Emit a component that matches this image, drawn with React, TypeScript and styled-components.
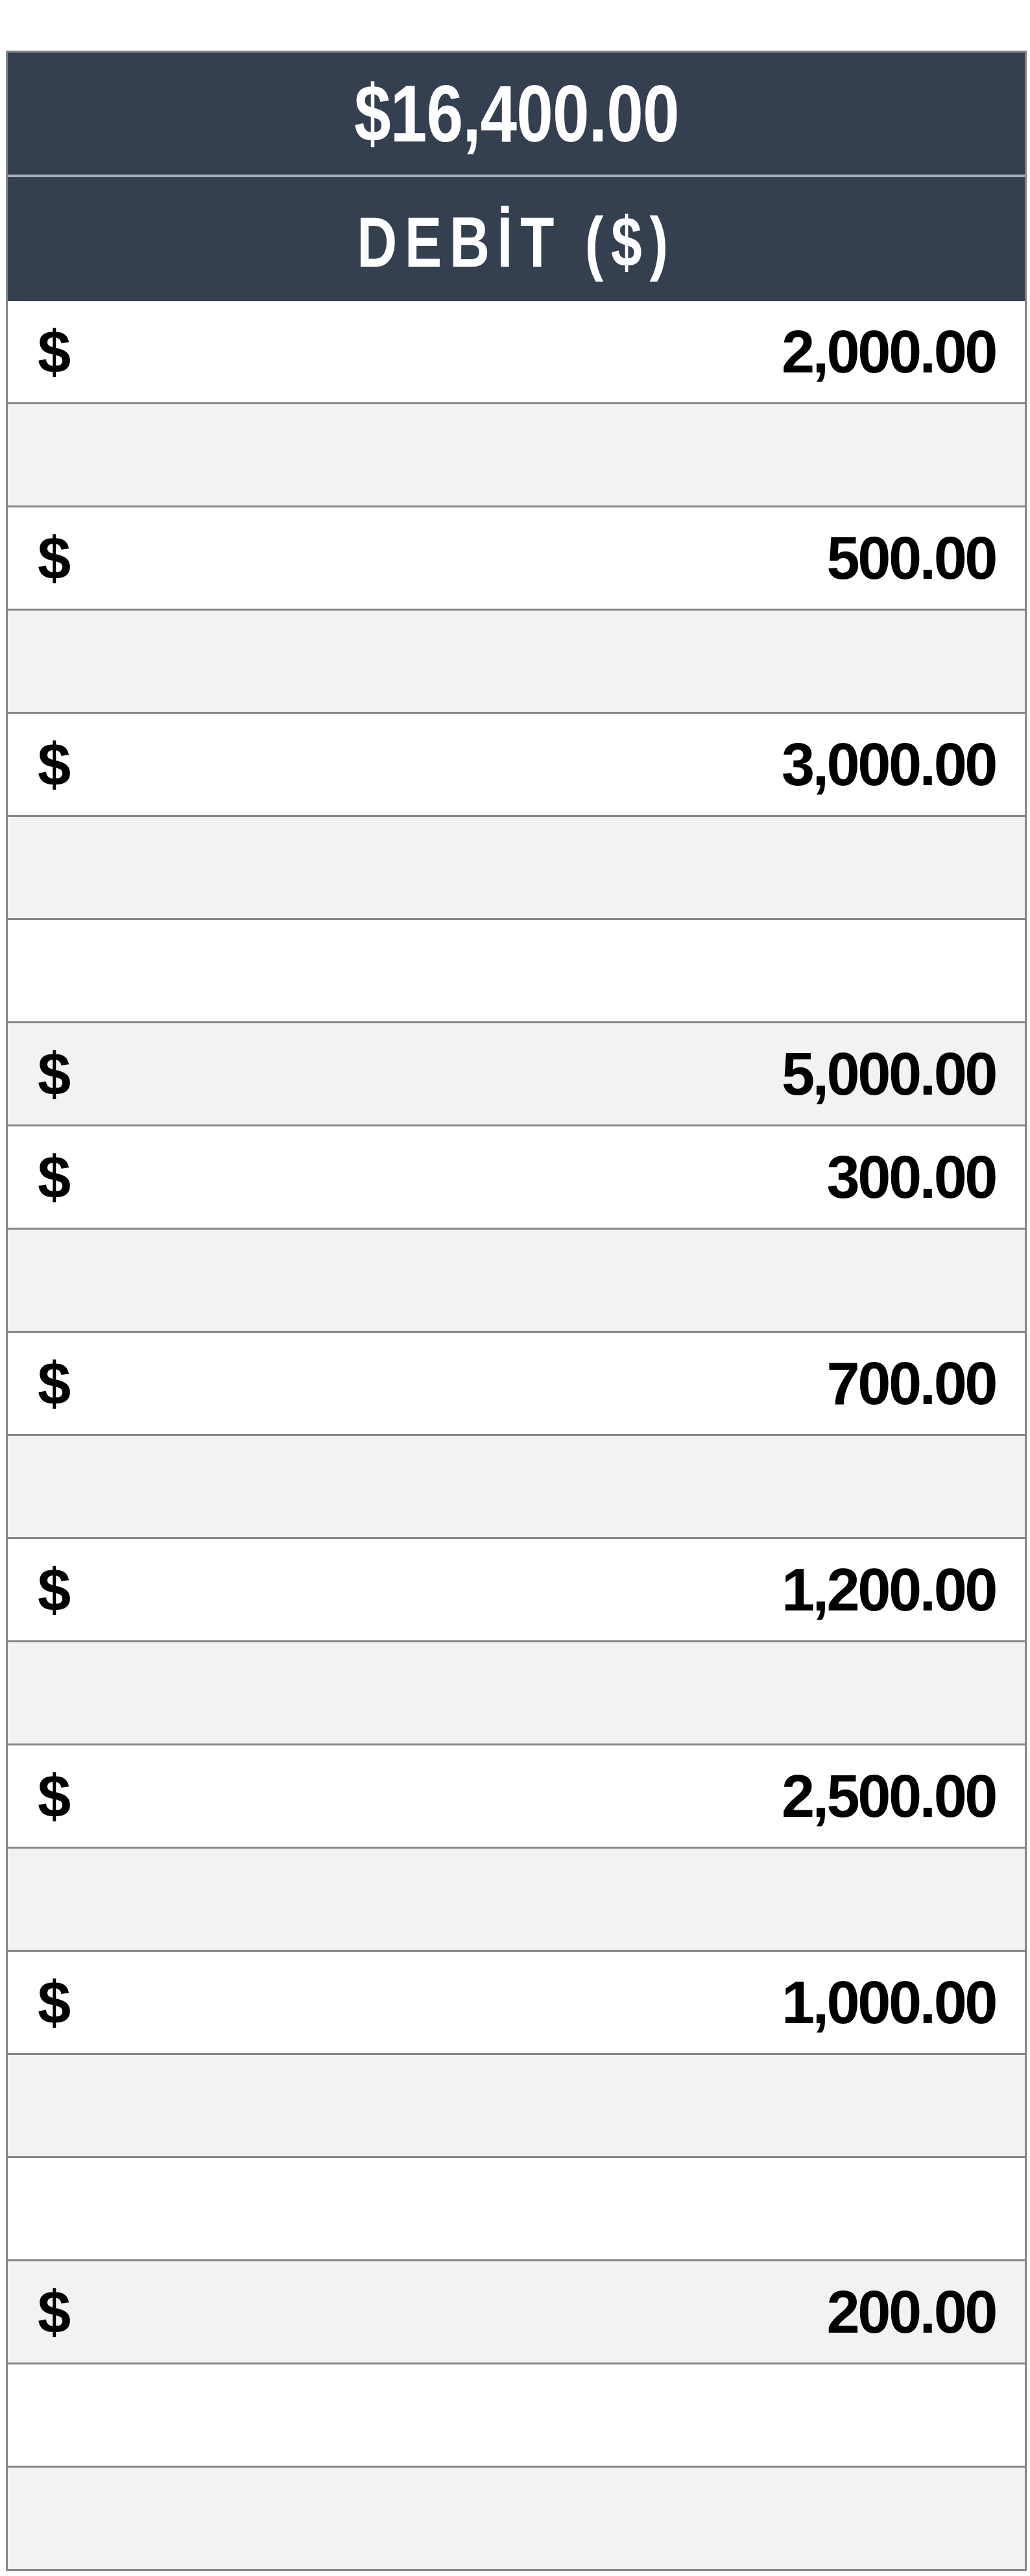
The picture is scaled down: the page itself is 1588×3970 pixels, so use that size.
import styled, { createGlobalStyle } from 'styled-components';

const GlobalStyle = createGlobalStyle`
    html, body {
        margin: 0;
        padding: 0;
        background: #ffffff;
    }
`;

const BORDER = '#858585';
const HEADER_BG = '#343f50';

const entries: (number | null)[] = [
    2000, null, 500, null, 3000, null, null, 5000, 300, null, 700,
    null, 1200, null, 2500, null, 1000, null, null, 200, null, null
];

function formatAmount(value: number) {
    return value.toLocaleString('en-US', { minimumFractionDigits: 2, maximumFractionDigits: 2 });
}

export default function App() {
    const total = entries.reduce<number>((sum, value) => sum + (value ?? 0), 0);

    return (
        <Page>
            <GlobalStyle />
            <Sheet>
                <TotalRow>
                    <Condensed>${formatAmount(total)}</Condensed>
                </TotalRow>
                <TitleRow>
                    <Condensed spaced>DEBİT ($)</Condensed>
                </TitleRow>
                {entries.map((value, index) => (
                    <Row key={index} shaded={index % 2 === 1}>
                        {value !== null && (
                            <>
                                <Currency>$</Currency>
                                <Amount>{formatAmount(value)}</Amount>
                            </>
                        )}
                    </Row>
                ))}
            </Sheet>
        </Page>
    );
}

const Page = styled.div`
    padding: 78px 5px 6px 9px;
`;

const Sheet = styled.div`
    display: flex;
    flex-direction: column;
    border-left: 3px solid ${BORDER};
    border-right: 3px solid ${BORDER};
    border-top: 3px solid ${BORDER};
`;

const HeaderRow = styled.div`
    display: flex;
    align-items: center;
    justify-content: center;
    box-sizing: border-box;
    background: ${HEADER_BG};
    color: #ffffff;
    font-family: 'Liberation Sans', Arial, sans-serif;
    font-weight: 700;
    overflow: hidden;
`;

const TotalRow = styled(HeaderRow)`
    height: 192px;
    font-size: 124px;
    border-bottom: 4px solid #a9b0ba;
`;

const TitleRow = styled(HeaderRow)`
    height: 191px;
    font-size: 110px;
    padding-top: 8px;
`;

const Condensed = styled.span<{ spaced?: boolean }>`
    display: inline-block;
    line-height: 1;
    transform: scaleX(${props => (props.spaced ? 0.78 : 0.82)});
    letter-spacing: ${props => (props.spaced ? '15px' : '-1px')};
    white-space: nowrap;
`;

const Row = styled.div<{ shaded: boolean }>`
    display: flex;
    align-items: center;
    justify-content: space-between;
    box-sizing: border-box;
    height: 159px;
    padding: 0 45px 0 46px;
    background: ${props => (props.shaded ? '#f2f2f2' : '#ffffff')};
    border-bottom: 3px solid ${BORDER};
    font-family: 'Liberation Sans', Arial, sans-serif;
    font-weight: 700;
    font-size: 92px;
    color: #000000;
`;

const Currency = styled.span`
    line-height: 1;
`;

const Amount = styled.span`
    line-height: 1;
    letter-spacing: -3.5px;
`;
